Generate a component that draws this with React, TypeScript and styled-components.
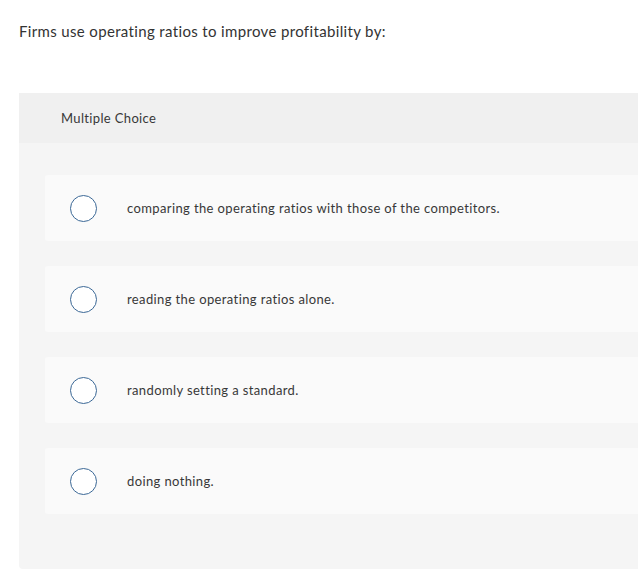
import React from "react";
import styled, { createGlobalStyle } from "styled-components";

const Global = createGlobalStyle`
  html, body { margin: 0; padding: 0; background: #ffffff; overflow: hidden; }
  body { font-family: "Lato", "Open Sans", sans-serif; color: #333333; }
`;

const Page = styled.div`
  width: 720px;
  padding: 21px 0 0 19px;
`;

const Prompt = styled.p`
  margin: 0;
  font-size: 15px;
  line-height: 20px;
  letter-spacing: 0.35px;
  color: #333333;
`;

const Panel = styled.section`
  margin-top: 52px;
  background: #f5f5f5;
  border-radius: 0 0 0 4px;
  padding-bottom: 55px;
`;

const PanelHeader = styled.div`
  height: 50px;
  background: #f0f0f0;
  display: flex;
  align-items: center;
  padding-left: 42px;
  font-size: 13px;
  letter-spacing: 0.35px;
  color: #383838;
`;

const Options = styled.div`
  display: flex;
  flex-direction: column;
  gap: 25px;
  padding: 32px 0 0 26px;
`;

const Option = styled.label`
  display: flex;
  align-items: center;
  height: 66px;
  background: #fafafa;
  border-radius: 3px;
  cursor: pointer;
`;

const Radio = styled.span`
  width: 25px;
  height: 25px;
  margin-left: 25px;
  border: 1.5px solid #3b6896;
  border-radius: 50%;
  background: #ffffff;
  flex: none;
`;

const OptionText = styled.span`
  margin-left: 30px;
  font-size: 13px;
  letter-spacing: 0.38px;
  color: #383838;
`;

const choices = [
  "comparing the operating ratios with those of the competitors.",
  "reading the operating ratios alone.",
  "randomly setting a standard.",
  "doing nothing.",
];

export default function App() {
  return (
    <>
      <Global />
      <Page>
        <Prompt>Firms use operating ratios to improve profitability by:</Prompt>
        <Panel>
          <PanelHeader>Multiple Choice</PanelHeader>
          <Options>
            {choices.map((c) => (
              <Option key={c}>
                <Radio />
                <OptionText>{c}</OptionText>
              </Option>
            ))}
          </Options>
        </Panel>
      </Page>
    </>
  );
}
